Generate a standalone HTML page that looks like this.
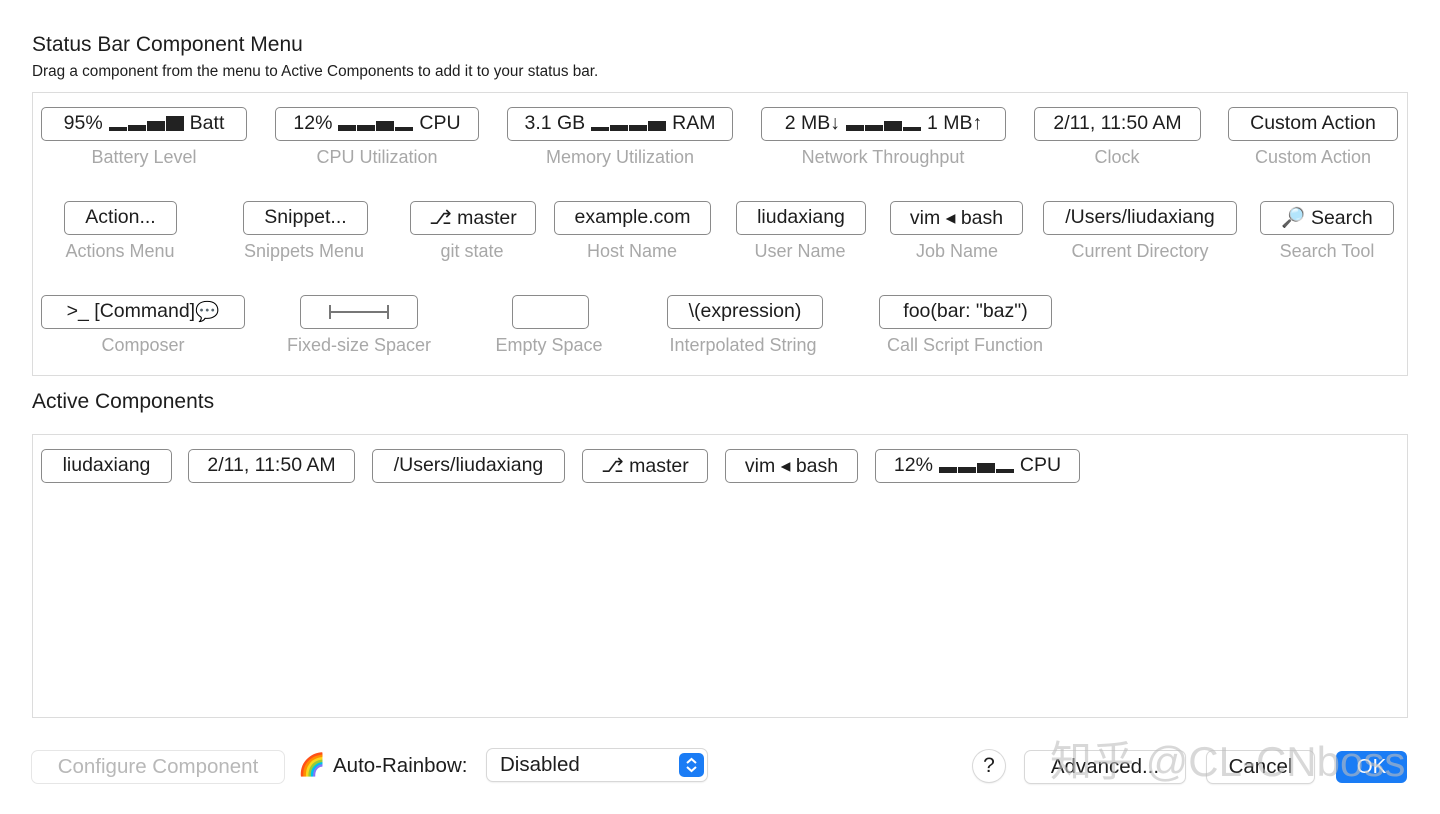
<!DOCTYPE html>
<html><head><meta charset="utf-8"><style>
*{box-sizing:border-box;margin:0;padding:0}
body{width:1440px;height:814px;background:#fff;font-family:"Liberation Sans","Noto Sans CJK SC",sans-serif;color:#1d1d1d;position:relative;overflow:hidden}
.a{position:absolute}
.panel{position:absolute;left:32px;width:1376px;border:1px solid #dcdcdc;background:#fff}
.p{position:absolute;height:34px;border:1px solid #8a8a8a;border-radius:5px;font-size:19.5px;display:flex;align-items:center;justify-content:center;white-space:nowrap;background:#fff;padding-bottom:1px}
.l{position:absolute;font-size:18px;color:#a8a8a8;text-align:center;white-space:nowrap;transform:translateX(-50%)}
.bars{display:inline-flex;align-items:flex-end;height:14px;margin:0 6px;gap:1px}
.bars i{display:block;width:18px;background:#222}
.btn{position:absolute;height:32px;border-radius:6px;background:#fff;box-shadow:0 0 0 1px #d8d8d8,0 1px 2px rgba(0,0,0,.15);font-size:20.5px;display:flex;align-items:center;justify-content:center}
</style></head><body>
<div class="a" style="left:32px;top:33px;font-size:21px">Status Bar Component Menu</div>
<div class="a" style="left:32px;top:63px;font-size:15.3px">Drag a component from the menu to Active Components to add it to your status bar.</div>
<div class="panel" style="top:92px;height:284px"></div>

<div class="p" style="left:41px;top:107px;width:206px">95%<span class="bars"><i style="height:4px"></i><i style="height:6px"></i><i style="height:10px"></i><i style="height:15px"></i></span>Batt</div>
<div class="l" style="left:144px;top:147px">Battery Level</div>
<div class="p" style="left:275px;top:107px;width:204px">12%<span class="bars"><i style="height:6px"></i><i style="height:6px"></i><i style="height:10px"></i><i style="height:4px"></i></span>CPU</div>
<div class="l" style="left:377px;top:147px">CPU Utilization</div>
<div class="p" style="left:507px;top:107px;width:226px">3.1 GB<span class="bars"><i style="height:4px"></i><i style="height:6px"></i><i style="height:6px"></i><i style="height:10px"></i></span>RAM</div>
<div class="l" style="left:620px;top:147px">Memory Utilization</div>
<div class="p" style="left:761px;top:107px;width:245px">2 MB↓<span class="bars"><i style="height:6px"></i><i style="height:6px"></i><i style="height:10px"></i><i style="height:4px"></i></span>1 MB↑</div>
<div class="l" style="left:883px;top:147px">Network Throughput</div>
<div class="p" style="left:1034px;top:107px;width:167px">2/11, 11:50 AM</div>
<div class="l" style="left:1117px;top:147px">Clock</div>
<div class="p" style="left:1228px;top:107px;width:170px">Custom Action</div>
<div class="l" style="left:1313px;top:147px">Custom Action</div>

<div class="p" style="left:64px;top:201px;width:113px">Action...</div>
<div class="l" style="left:120px;top:241px">Actions Menu</div>
<div class="p" style="left:243px;top:201px;width:125px">Snippet...</div>
<div class="l" style="left:304px;top:241px">Snippets Menu</div>
<div class="p" style="left:410px;top:201px;width:126px">⎇&nbsp;master</div>
<div class="l" style="left:472px;top:241px">git state</div>
<div class="p" style="left:554px;top:201px;width:157px">example.com</div>
<div class="l" style="left:632px;top:241px">Host Name</div>
<div class="p" style="left:736px;top:201px;width:130px">liudaxiang</div>
<div class="l" style="left:800px;top:241px">User Name</div>
<div class="p" style="left:890px;top:201px;width:133px">vim ◂ bash</div>
<div class="l" style="left:957px;top:241px">Job Name</div>
<div class="p" style="left:1043px;top:201px;width:194px">/Users/liudaxiang</div>
<div class="l" style="left:1140px;top:241px">Current Directory</div>
<div class="p" style="left:1260px;top:201px;width:134px">🔎&nbsp;Search</div>
<div class="l" style="left:1327px;top:241px">Search Tool</div>

<div class="p" style="left:41px;top:295px;width:204px">&gt;_ [Command] <span style="color:#999">💬</span></div>
<div class="l" style="left:143px;top:335px">Composer</div>
<div class="p" style="left:300px;top:295px;width:118px;padding:0"><svg width="62" height="18"><path d="M2 2V16M60 2V16M2 9H60" stroke="#777" stroke-width="2" fill="none"/></svg></div>
<div class="l" style="left:359px;top:335px">Fixed-size Spacer</div>
<div class="p" style="left:512px;top:295px;width:77px"></div>
<div class="l" style="left:549px;top:335px">Empty Space</div>
<div class="p" style="left:667px;top:295px;width:156px">\(expression)</div>
<div class="l" style="left:743px;top:335px">Interpolated String</div>
<div class="p" style="left:879px;top:295px;width:173px">foo(bar: "baz")</div>
<div class="l" style="left:965px;top:335px">Call Script Function</div>

<div class="a" style="left:32px;top:390px;font-size:21px">Active Components</div>
<div class="panel" style="top:434px;height:284px"></div>
<div class="p" style="left:41px;top:449px;width:131px">liudaxiang</div>
<div class="p" style="left:188px;top:449px;width:167px">2/11, 11:50 AM</div>
<div class="p" style="left:372px;top:449px;width:193px">/Users/liudaxiang</div>
<div class="p" style="left:582px;top:449px;width:126px">⎇&nbsp;master</div>
<div class="p" style="left:725px;top:449px;width:133px">vim ◂ bash</div>
<div class="p" style="left:875px;top:449px;width:205px">12%<span class="bars"><i style="height:6px"></i><i style="height:6px"></i><i style="height:10px"></i><i style="height:4px"></i></span>CPU</div>

<div class="btn" style="left:32px;top:751px;width:252px;color:#b8b8b8;box-shadow:0 0 0 1px #e6e6e6">Configure Component</div>
<div class="a" style="left:298px;top:752px;font-size:22px">🌈</div>
<div class="a" style="left:333px;top:754px;font-size:20.5px">Auto-Rainbow:</div>
<div class="btn" style="left:487px;top:749px;width:220px;justify-content:flex-start;padding-left:13px">Disabled
<div class="a" style="right:3px;top:4px;width:25px;height:24px;background:#1a7cf5;border-radius:5px"><svg width="25" height="24"><path d="M8 10L12.5 6 17 10M8 14L12.5 18 17 14" stroke="#fff" stroke-width="2" fill="none"/></svg></div></div>
<div class="btn" style="left:973px;top:750px;width:32px;height:32px;border-radius:16px;font-size:21px">?</div>
<div class="btn" style="left:1025px;top:751px;width:160px">Advanced...</div>
<div class="btn" style="left:1207px;top:751px;width:107px">Cancel</div>
<div class="btn" style="left:1336px;top:751px;width:71px;background:#1a7cf5;color:#fff;box-shadow:none">OK</div>
<div class="a" style="left:1050px;top:728px;font-size:42px;color:rgba(190,190,190,.6);white-space:nowrap">知乎 @CL-CNboss</div>
</body></html>
